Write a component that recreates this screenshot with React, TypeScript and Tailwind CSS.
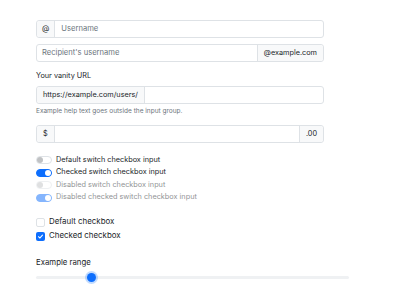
import React from "react";

const font = { fontFamily: 'Inter, "Liberation Sans", Arial, sans-serif' };

function Switch({ checked, disabled }: { checked?: boolean; disabled?: boolean }) {
  return (
    <div
      className={
        "relative w-[16px] h-[8px] rounded-full border flex items-center " +
        (checked ? "bg-[#0d6efd] border-[#0d6efd] justify-end" : "bg-white border-[#dee2e6] justify-start") +
        (disabled ? " opacity-50" : "")
      }
    >
      <div
        className={
          "w-[6px] h-[6px] rounded-full " + (checked ? "bg-white" : "bg-[#c0c2c4]")
        }
      />
    </div>
  );
}

export default function App() {
  return (
    <div className="w-[400px] h-[300px] bg-white text-[#212529] overflow-hidden" style={font}>
      <div className="pl-[36px] pt-[20px]">
        <div className="w-[288px]">
          {/* group 1 */}
          <div className="flex h-[18px] border border-[#dee2e6] rounded-[3px] text-[7.6px]">
            <div className="flex items-center px-[5px] bg-[#f8f9fa] border-r border-[#dee2e6] rounded-l-[3px]">@</div>
            <div className="flex items-center px-[6px] text-[#6c757d]">Username</div>
          </div>
          {/* group 2 */}
          <div className="flex h-[18px] mt-[6px] border border-[#dee2e6] rounded-[3px] text-[7.6px]">
            <div className="flex-1 flex items-center px-[5px] text-[#6c757d]">Recipient's username</div>
            <div className="flex items-center px-[6px] bg-[#f8f9fa] border-l border-[#dee2e6] rounded-r-[3px] text-[7.3px]">@example.com</div>
          </div>
          <div className="mt-[9px] h-[10px] leading-[10px] text-[7.3px]">Your vanity URL</div>
          <div className="flex h-[18px] mt-[5px] border border-[#dee2e6] rounded-[3px] text-[7.3px]">
            <div className="flex items-center px-[6px] bg-[#f8f9fa] border-r border-[#dee2e6] rounded-l-[3px]">https://example.com/users/</div>
            <div className="flex-1" />
          </div>
          <div className="mt-[2px] h-[10px] leading-[10px] text-[6.5px] text-[#6c757d]">
            Example help text goes outside the input group.
          </div>
          <div className="flex h-[18px] mt-[9px] border border-[#dee2e6] rounded-[3px] text-[7.3px]">
            <div className="flex items-center px-[6px] bg-[#f8f9fa] border-r border-[#dee2e6] rounded-l-[3px]">$</div>
            <div className="flex-1" />
            <div className="flex items-center px-[6px] bg-[#f8f9fa] border-l border-[#dee2e6] rounded-r-[3px]">.00</div>
          </div>
        </div>

        {/* switches */}
        <div className="mt-[11px] text-[7.3px]">
          <div className="flex items-center h-[12.5px] gap-[4px]">
            <Switch />
            <span>Default switch checkbox input</span>
          </div>
          <div className="flex items-center h-[12.5px] gap-[4px]">
            <Switch checked />
            <span>Checked switch checkbox input</span>
          </div>
          <div className="flex items-center h-[12.5px] gap-[4px]">
            <Switch disabled />
            <span className="opacity-50">Disabled switch checkbox input</span>
          </div>
          <div className="flex items-center h-[12.5px] gap-[4px]">
            <Switch checked disabled />
            <span className="opacity-50">Disabled checked switch checkbox input</span>
          </div>
        </div>

        {/* checkboxes */}
        <div className="mt-[11px] text-[7.9px]">
          <div className="flex items-center h-[14px] gap-[4px]">
            <div className="w-[9px] h-[9px] rounded-[2px] border border-[#dee2e6] bg-white" />
            <span>Default checkbox</span>
          </div>
          <div className="flex items-center h-[14px] gap-[4px]">
            <div className="w-[9px] h-[9px] rounded-[2px] bg-[#0d6efd] flex items-center justify-center">
              <svg width="7" height="7" viewBox="0 0 16 16" fill="none">
                <path d="M3.5 8.5l3 3 6-6.5" stroke="white" strokeWidth="2.5" strokeLinecap="round" strokeLinejoin="round" />
              </svg>
            </div>
            <span>Checked checkbox</span>
          </div>
        </div>

        <div className="mt-[14px] h-[10px] leading-[10px] text-[7.8px]">Example range</div>
        <div className="mt-[5.5px] relative w-[313px] h-[10px] flex items-center">
          <div className="w-full h-[3px] rounded-full bg-[#eff1f3]" />
          <div className="absolute left-[51px] top-[0.5px] w-[9px] h-[9px] rounded-full bg-[#0d6efd] ring-2 ring-[#0d6efd]/25" />
        </div>
      </div>
    </div>
  );
}
